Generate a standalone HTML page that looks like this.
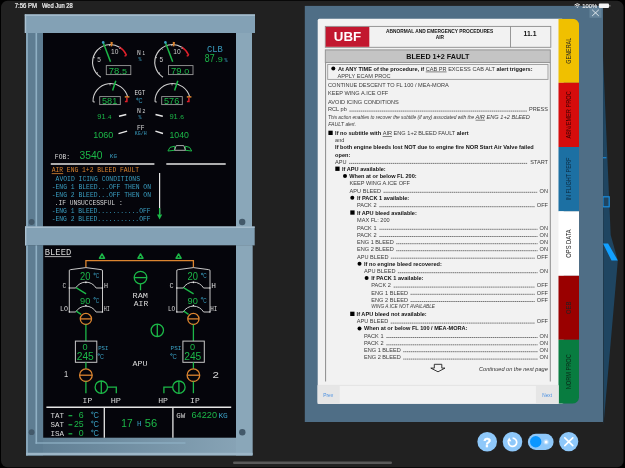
<!DOCTYPE html><html><head><meta charset="utf-8"><style>
html,body{margin:0;padding:0;background:#000;width:625px;height:468px;overflow:hidden}
svg{display:block;will-change:transform}
</style></head><body>
<svg width="625" height="468" viewBox="0 0 625 468">
<rect x="0" y="0" width="625" height="468" fill="#000"/>
<rect x="1" y="0.8" width="622.6" height="466.4" rx="6.5" fill="#212121"/>
<defs><linearGradient id="gb" x1="0" x2="1" y1="0" y2="0"><stop offset="0" stop-color="#5e7d92"/><stop offset="1" stop-color="#8aa6b8"/></linearGradient></defs>
<rect x="26" y="33" width="17" height="194" fill="#5e7d92"/>
<rect x="26" y="33" width="2" height="194" fill="#86a5b9"/>
<rect x="35.5" y="33" width="1.6" height="194" fill="#8fb0c4"/>
<rect x="236" y="33" width="16" height="194" fill="#8aa7b9"/>
<rect x="43" y="33" width="193" height="193.5" fill="#05050b"/>
<circle cx="31.6" cy="222" r="2.9" fill="#43596a"/><circle cx="242.2" cy="222" r="3.2" fill="#43596a"/>
<rect x="24.8" y="14.4" width="230.2" height="18.6" fill="#83a1b5"/>
<rect x="24.8" y="14.4" width="230.2" height="1.4" fill="#aac0d0"/><rect x="24.8" y="14.4" width="1.4" height="18.6" fill="#aac0d0"/>
<rect x="25" y="226.5" width="229.7" height="18.9" fill="#83a1b5"/>
<rect x="25" y="226.5" width="229.7" height="1.4" fill="#aac0d0"/><rect x="25" y="226.5" width="1.4" height="18.9" fill="#aac0d0"/>
<rect x="26" y="245.4" width="226.6" height="210" fill="url(#gb)"/>
<rect x="26" y="245.4" width="17" height="210" fill="#5e7d92"/>
<rect x="236" y="245.4" width="16.2" height="210" fill="#8aa7b9"/>
<rect x="26" y="245.4" width="2" height="210" fill="#86a5b9"/>
<rect x="35.5" y="245.4" width="1.6" height="198.3" fill="#8fb0c4"/>
<rect x="35.5" y="442.2" width="150" height="1.6" fill="#8fb0c4" opacity="0.8"/>
<rect x="26" y="452.8" width="226.6" height="2.6" fill="#9cb6c7"/>
<rect x="43.2" y="245.4" width="192.8" height="192.3" fill="#05050b"/>
<circle cx="31.6" cy="432.2" r="2.9" fill="#43596a"/><circle cx="242.3" cy="432.2" r="3.2" fill="#43596a"/>
<path d="M100.82 77.21 A17.7 17.7 0 0 1 119.58 47.19" fill="none" stroke="#cfcfcf" stroke-width="1.1"/>
<path d="M119.58 47.19 A17.7 17.7 0 0 1 126.49 55.28" fill="none" stroke="#e0202a" stroke-width="1.6"/>
<line x1="124.47" y1="56.14" x2="126.49" y2="55.28" stroke="#e0202a" stroke-width="1.3"/>
<line x1="97.87" y1="72.55" x2="96.64" y2="73.58" stroke="#cfcfcf" stroke-width="0.9"/>
<line x1="94.72" y1="57.76" x2="93.19" y2="57.32" stroke="#cfcfcf" stroke-width="0.9"/>
<line x1="100.29" y1="49.51" x2="99.3" y2="48.25" stroke="#cfcfcf" stroke-width="0.9"/>
<line x1="109.64" y1="46.11" x2="109.58" y2="44.51" stroke="#cfcfcf" stroke-width="0.9"/>
<line x1="119.43" y1="49.01" x2="120.35" y2="47.7" stroke="#cfcfcf" stroke-width="0.9"/>
<path d="M110.60000000000001 41.8 L112.9 42.2 L112.10000000000001 46.6 L110.5 46.2 Z" fill="#dc8530"/>
<line x1="110.5" y1="61.7" x2="103.19" y2="42.4" stroke="#1cb848" stroke-width="1.5"/>
<circle cx="103.19" cy="42.4" r="1.3" fill="#3a9fc2"/>
<text x="97.2" y="61.5" font-size="7.2" fill="#cfcfcf" font-family='"Liberation Sans",sans-serif' font-weight="normal" font-style="normal" text-anchor="start" textLength="3.6" lengthAdjust="spacingAndGlyphs" >5</text>
<text x="111.0" y="54.2" font-size="7.2" fill="#cfcfcf" font-family='"Liberation Sans",sans-serif' font-weight="normal" font-style="normal" text-anchor="start" textLength="7.4" lengthAdjust="spacingAndGlyphs" >10</text>
<rect x="106.3" y="65.6" width="24.5" height="9" fill="none" stroke="#9a9a9a" stroke-width="0.9"/>
<text x="108.7" y="73.6" font-size="9.6" fill="#1cb848" font-family='"Liberation Sans",sans-serif' font-weight="normal" font-style="normal" text-anchor="start" textLength="10.5" lengthAdjust="spacingAndGlyphs" >78</text>
<text x="119.5" y="73.6" font-size="7" fill="#1cb848" font-family='"Liberation Sans",sans-serif' font-weight="normal" font-style="normal" text-anchor="start" textLength="7.5" lengthAdjust="spacingAndGlyphs" >.5</text>
<path d="M163.02 77.21 A17.7 17.7 0 0 1 181.78 47.19" fill="none" stroke="#cfcfcf" stroke-width="1.1"/>
<path d="M181.78 47.19 A17.7 17.7 0 0 1 188.69 55.28" fill="none" stroke="#e0202a" stroke-width="1.6"/>
<line x1="186.67" y1="56.14" x2="188.69" y2="55.28" stroke="#e0202a" stroke-width="1.3"/>
<line x1="160.07" y1="72.55" x2="158.84" y2="73.58" stroke="#cfcfcf" stroke-width="0.9"/>
<line x1="156.92" y1="57.76" x2="155.39" y2="57.32" stroke="#cfcfcf" stroke-width="0.9"/>
<line x1="162.49" y1="49.51" x2="161.5" y2="48.25" stroke="#cfcfcf" stroke-width="0.9"/>
<line x1="171.84" y1="46.11" x2="171.78" y2="44.51" stroke="#cfcfcf" stroke-width="0.9"/>
<line x1="181.63" y1="49.01" x2="182.55" y2="47.7" stroke="#cfcfcf" stroke-width="0.9"/>
<path d="M172.8 41.8 L175.1 42.2 L174.3 46.6 L172.70000000000002 46.2 Z" fill="#dc8530"/>
<line x1="172.70000000000002" y1="61.7" x2="165.39" y2="42.4" stroke="#1cb848" stroke-width="1.5"/>
<circle cx="165.39" cy="42.4" r="1.3" fill="#3a9fc2"/>
<text x="159.4" y="61.5" font-size="7.2" fill="#cfcfcf" font-family='"Liberation Sans",sans-serif' font-weight="normal" font-style="normal" text-anchor="start" textLength="3.6" lengthAdjust="spacingAndGlyphs" >5</text>
<text x="173.20000000000002" y="54.2" font-size="7.2" fill="#cfcfcf" font-family='"Liberation Sans",sans-serif' font-weight="normal" font-style="normal" text-anchor="start" textLength="7.4" lengthAdjust="spacingAndGlyphs" >10</text>
<rect x="168.5" y="65.6" width="24.5" height="9" fill="none" stroke="#9a9a9a" stroke-width="0.9"/>
<text x="170.9" y="73.6" font-size="9.6" fill="#1cb848" font-family='"Liberation Sans",sans-serif' font-weight="normal" font-style="normal" text-anchor="start" textLength="10.5" lengthAdjust="spacingAndGlyphs" >79</text>
<text x="181.7" y="73.6" font-size="7" fill="#1cb848" font-family='"Liberation Sans",sans-serif' font-weight="normal" font-style="normal" text-anchor="start" textLength="7.5" lengthAdjust="spacingAndGlyphs" >.0</text>
<text x="137" y="54.5" font-size="7" fill="#d8d8d8" font-family='"Liberation Mono",monospace' font-weight="normal" font-style="normal" text-anchor="start" textLength="3.8" lengthAdjust="spacingAndGlyphs" >N</text>
<text x="142.4" y="54.8" font-size="5" fill="#d8d8d8" font-family='"Liberation Sans",sans-serif' font-weight="normal" font-style="normal" text-anchor="start" textLength="2.5" lengthAdjust="spacingAndGlyphs" >1</text>
<text x="138.6" y="61.2" font-size="5" fill="#3a9fc2" font-family='"Liberation Mono",monospace' font-weight="normal" font-style="normal" text-anchor="start" textLength="3" lengthAdjust="spacingAndGlyphs" >%</text>
<text x="207" y="52" font-size="9.2" fill="#3a9fc2" font-family='"Liberation Mono",monospace' font-weight="normal" font-style="normal" text-anchor="start" textLength="15.8" lengthAdjust="spacingAndGlyphs" >CLB</text>
<text x="204.8" y="62.1" font-size="10.5" fill="#1cb848" font-family='"Liberation Sans",sans-serif' font-weight="normal" font-style="normal" text-anchor="start" textLength="9.8" lengthAdjust="spacingAndGlyphs" >87</text>
<text x="215.2" y="62.1" font-size="7.2" fill="#1cb848" font-family='"Liberation Sans",sans-serif' font-weight="normal" font-style="normal" text-anchor="start" textLength="7.6" lengthAdjust="spacingAndGlyphs" >.9</text>
<text x="224.6" y="62.1" font-size="4.8" fill="#3a9fc2" font-family='"Liberation Mono",monospace' font-weight="normal" font-style="normal" text-anchor="start" textLength="3" lengthAdjust="spacingAndGlyphs" >%</text>
<path d="M93.01 101.81 A17.6 17.6 0 0 1 127.68 96.94" fill="none" stroke="#cfcfcf" stroke-width="1.1"/>
<line x1="93.01" y1="101.81" x2="94.81" y2="102.01" stroke="#cfcfcf" stroke-width="1"/>
<line x1="110.05" y1="85.41" x2="109.99" y2="83.61" stroke="#cfcfcf" stroke-width="0.9"/>
<line x1="124.8" y1="96.9" x2="129.4" y2="96.9" stroke="#dc8530" stroke-width="1.5"/>
<path d="M126.89999999999999 97.7 V101.5 H124.89999999999999" fill="none" stroke="#e0202a" stroke-width="1.5"/>
<line x1="112.6" y1="90.4" x2="115.8" y2="80.8" stroke="#1cb848" stroke-width="1.5"/>
<rect x="99.69999999999999" y="96.6" width="20.6" height="8" fill="none" stroke="#9a9a9a" stroke-width="0.9"/>
<text x="101.99999999999999" y="103.7" font-size="8.6" fill="#1cb848" font-family='"Liberation Sans",sans-serif' font-weight="normal" font-style="normal" text-anchor="start" textLength="15.2" lengthAdjust="spacingAndGlyphs" >581</text>
<path d="M155.01 101.81 A17.6 17.6 0 0 1 189.68 96.94" fill="none" stroke="#cfcfcf" stroke-width="1.1"/>
<line x1="155.01" y1="101.81" x2="156.81" y2="102.01" stroke="#cfcfcf" stroke-width="1"/>
<line x1="172.05" y1="85.41" x2="171.99" y2="83.61" stroke="#cfcfcf" stroke-width="0.9"/>
<line x1="186.79999999999998" y1="96.9" x2="191.4" y2="96.9" stroke="#dc8530" stroke-width="1.5"/>
<path d="M188.9 97.7 V101.5 H186.9" fill="none" stroke="#e0202a" stroke-width="1.5"/>
<line x1="174.6" y1="90.4" x2="177.79999999999998" y2="80.8" stroke="#1cb848" stroke-width="1.5"/>
<rect x="161.7" y="96.6" width="20.6" height="8" fill="none" stroke="#9a9a9a" stroke-width="0.9"/>
<text x="164.0" y="103.7" font-size="8.6" fill="#1cb848" font-family='"Liberation Sans",sans-serif' font-weight="normal" font-style="normal" text-anchor="start" textLength="15.2" lengthAdjust="spacingAndGlyphs" >576</text>
<text x="134.4" y="94.9" font-size="7" fill="#d8d8d8" font-family='"Liberation Mono",monospace' font-weight="normal" font-style="normal" text-anchor="start" textLength="10.9" lengthAdjust="spacingAndGlyphs" >EGT</text>
<circle cx="137.4" cy="99.0" r="0.8" fill="none" stroke="#3a9fc2" stroke-width="0.75"/>
<text x="138.5" y="102.6" font-size="6.69" fill="#3a9fc2" font-family='"Liberation Sans",sans-serif' textLength="4.00" lengthAdjust="spacingAndGlyphs">C</text>
<text x="137" y="112.8" font-size="6.5" fill="#d8d8d8" font-family='"Liberation Mono",monospace' font-weight="normal" font-style="normal" text-anchor="start" textLength="3.9" lengthAdjust="spacingAndGlyphs" >N</text>
<text x="142.4" y="113" font-size="5" fill="#d8d8d8" font-family='"Liberation Sans",sans-serif' font-weight="normal" font-style="normal" text-anchor="start" textLength="2.8" lengthAdjust="spacingAndGlyphs" >2</text>
<text x="138.4" y="118.8" font-size="5" fill="#3a9fc2" font-family='"Liberation Mono",monospace' font-weight="normal" font-style="normal" text-anchor="start" textLength="3" lengthAdjust="spacingAndGlyphs" >%</text>
<text x="97.2" y="118.6" font-size="7.2" fill="#1cb848" font-family='"Liberation Sans",sans-serif' font-weight="normal" font-style="normal" text-anchor="start" textLength="8.4" lengthAdjust="spacingAndGlyphs" >91</text>
<text x="106.3" y="118.6" font-size="5.5" fill="#1cb848" font-family='"Liberation Sans",sans-serif' font-weight="normal" font-style="normal" text-anchor="start" textLength="5.2" lengthAdjust="spacingAndGlyphs" >.4</text>
<text x="169.4" y="118.6" font-size="7.2" fill="#1cb848" font-family='"Liberation Sans",sans-serif' font-weight="normal" font-style="normal" text-anchor="start" textLength="8.4" lengthAdjust="spacingAndGlyphs" >91</text>
<text x="178.5" y="118.6" font-size="5.5" fill="#1cb848" font-family='"Liberation Sans",sans-serif' font-weight="normal" font-style="normal" text-anchor="start" textLength="5.6" lengthAdjust="spacingAndGlyphs" >.6</text>
<line x1="119" y1="116.3" x2="126.3" y2="114.5" stroke="#e8e8e8" stroke-width="1.4"/>
<line x1="155.5" y1="114.5" x2="162.8" y2="116.3" stroke="#e8e8e8" stroke-width="1.4"/>
<line x1="118.5" y1="133.7" x2="127.1" y2="131.2" stroke="#e8e8e8" stroke-width="1.4"/>
<line x1="155.4" y1="131.2" x2="163" y2="133.5" stroke="#e8e8e8" stroke-width="1.4"/>
<text x="137" y="129.5" font-size="7" fill="#d8d8d8" font-family='"Liberation Mono",monospace' font-weight="normal" font-style="normal" text-anchor="start" textLength="7.6" lengthAdjust="spacingAndGlyphs" >FF</text>
<text x="134.8" y="134.6" font-size="4.6" fill="#3a9fc2" font-family='"Liberation Mono",monospace' font-weight="normal" font-style="normal" text-anchor="start" textLength="11.8" lengthAdjust="spacingAndGlyphs" >KG/H</text>
<text x="93.3" y="138" font-size="9.4" fill="#1cb848" font-family='"Liberation Sans",sans-serif' font-weight="normal" font-style="normal" text-anchor="start" textLength="20.1" lengthAdjust="spacingAndGlyphs" >1060</text>
<text x="169.5" y="138" font-size="9.4" fill="#1cb848" font-family='"Liberation Sans",sans-serif' font-weight="normal" font-style="normal" text-anchor="start" textLength="19.5" lengthAdjust="spacingAndGlyphs" >1040</text>
<path d="M167.9 151 L170 147.4 L174.6 146.2 L174.6 150.3 Z" fill="none" stroke="#1cb848" stroke-width="1"/>
<path d="M191.7 151 L189.6 147.4 L185.4 146.2 L185.4 150.3 Z" fill="none" stroke="#1cb848" stroke-width="1"/>
<path d="M174.6 150.3 L176.2 145.6 H183.8 L185.4 150.3 Z" fill="none" stroke="#aaaaaa" stroke-width="1"/>
<text x="54.8" y="158.6" font-size="7.6" fill="#d8d8d8" font-family='"Liberation Mono",monospace' font-weight="normal" font-style="normal" text-anchor="start" textLength="15.4" lengthAdjust="spacingAndGlyphs" >FOB:</text>
<text x="79.6" y="158.9" font-size="11" fill="#1cb848" font-family='"Liberation Sans",sans-serif' font-weight="normal" font-style="normal" text-anchor="start" textLength="23" lengthAdjust="spacingAndGlyphs" >3540</text>
<text x="109.8" y="158.4" font-size="4.6" fill="#3a9fc2" font-family='"Liberation Mono",monospace' font-weight="normal" font-style="normal" text-anchor="start" textLength="7.2" lengthAdjust="spacingAndGlyphs" >KG</text>
<line x1="50.8" y1="164" x2="154.4" y2="164" stroke="#e6e6e6" stroke-width="1.5"/>
<line x1="166.3" y1="164" x2="225.7" y2="164" stroke="#e6e6e6" stroke-width="1.5"/>
<line x1="159.6" y1="173" x2="159.6" y2="214" stroke="#e6e6e6" stroke-width="1.2"/>
<line x1="159.6" y1="208" x2="159.6" y2="217" stroke="#1cb848" stroke-width="1.3"/>
<path d="M157 214.5 L159.6 219.5 L162.2 214.5 Z" fill="#1cb848"/>
<text x="51.7" y="172.3" font-size="7" fill="#dc8530" font-family='"Liberation Mono",monospace' font-weight="normal" font-style="normal" text-anchor="start" textLength="87.3" lengthAdjust="spacingAndGlyphs" >AIR ENG 1+2 BLEED FAULT</text>
<text x="55.6" y="181.3" font-size="7" fill="#3a9fc2" font-family='"Liberation Mono",monospace' font-weight="normal" font-style="normal" text-anchor="start" textLength="84.4" lengthAdjust="spacingAndGlyphs" >AVOID ICING CONDITIONS</text>
<text x="51.7" y="189.3" font-size="7" fill="#3a9fc2" font-family='"Liberation Mono",monospace' font-weight="normal" font-style="normal" text-anchor="start" textLength="99.3" lengthAdjust="spacingAndGlyphs" >-ENG 1 BLEED...OFF THEN ON</text>
<text x="51.7" y="197.1" font-size="7" fill="#3a9fc2" font-family='"Liberation Mono",monospace' font-weight="normal" font-style="normal" text-anchor="start" textLength="99.3" lengthAdjust="spacingAndGlyphs" >-ENG 2 BLEED...OFF THEN ON</text>
<text x="54.6" y="204.7" font-size="7" fill="#d8d8d8" font-family='"Liberation Mono",monospace' font-weight="normal" font-style="normal" text-anchor="start" textLength="68.1" lengthAdjust="spacingAndGlyphs" >.IF UNSUCCESSFUL :</text>
<text x="51.7" y="212.9" font-size="7" fill="#3a9fc2" font-family='"Liberation Mono",monospace' font-weight="normal" font-style="normal" text-anchor="start" textLength="98.9" lengthAdjust="spacingAndGlyphs" >-ENG 1 BLEED...........OFF</text>
<text x="51.7" y="220.6" font-size="7" fill="#3a9fc2" font-family='"Liberation Mono",monospace' font-weight="normal" font-style="normal" text-anchor="start" textLength="98.9" lengthAdjust="spacingAndGlyphs" >-ENG 2 BLEED...........OFF</text>
<line x1="51.7" y1="173.6" x2="63.2" y2="173.6" stroke="#dc8530" stroke-width="0.8"/>
<text x="44.8" y="255.2" font-size="8.6" fill="#d8d8d8" font-family='"Liberation Mono",monospace' font-weight="normal" font-style="normal" text-anchor="start" textLength="26.4" lengthAdjust="spacingAndGlyphs" >BLEED</text>
<line x1="44.8" y1="256.6" x2="71.2" y2="256.6" stroke="#d8d8d8" stroke-width="0.8"/>
<path d="M102 254 L104.5 258.2 H99.5 Z" fill="none" stroke="#1cb848" stroke-width="1.5" stroke-linejoin="round"/>
<path d="M140.5 254 L143.0 258.2 H138.0 Z" fill="none" stroke="#1cb848" stroke-width="1.5" stroke-linejoin="round"/>
<path d="M178.6 254 L181.1 258.2 H176.1 Z" fill="none" stroke="#1cb848" stroke-width="1.5" stroke-linejoin="round"/>
<path d="M85.9 267.6 V260.6 H193.4 V267.6" fill="none" stroke="#dc8530" stroke-width="1.3"/>
<path d="M69.30000000000001 312 V270.2 L70.80000000000001 269.6 L85.9 267.6 L101.0 269.6 L102.5 270.2 V312" fill="none" stroke="#c8c8c8" stroke-width="1"/>
<path d="M69.30000000000001 288 H75.7 A11.8 11.8 0 0 1 96.10000000000001 288 H102.5" fill="none" stroke="#c8c8c8" stroke-width="1"/>
<circle cx="85.9" cy="282.4" r="0.8" fill="#eee"/>
<circle cx="69.30000000000001" cy="288" r="0.7" fill="#eee"/><circle cx="102.5" cy="288" r="0.7" fill="#eee"/>
<path d="M69.30000000000001 312 H75.7 A11.8 11.8 0 0 1 96.10000000000001 312 H102.5" fill="none" stroke="#c8c8c8" stroke-width="1"/>
<circle cx="85.9" cy="305.6" r="0.8" fill="#eee"/>
<circle cx="69.30000000000001" cy="312" r="0.7" fill="#eee"/><circle cx="102.5" cy="312" r="0.7" fill="#eee"/>
<line x1="76.0" y1="287.7" x2="86.10000000000001" y2="293.8" stroke="#1cb848" stroke-width="1.4"/>
<line x1="76.30000000000001" y1="311.2" x2="81.0" y2="314.4" stroke="#1cb848" stroke-width="1.4"/>
<text x="80.0" y="279.9" font-size="10.4" fill="#1cb848" font-family='"Liberation Sans",sans-serif' font-weight="normal" font-style="normal" text-anchor="start" textLength="10.4" lengthAdjust="spacingAndGlyphs" >20</text>
<circle cx="94.60000000000001" cy="274.0" r="0.8" fill="none" stroke="#3a9fc2" stroke-width="0.75"/>
<text x="95.7" y="278" font-size="7.27" fill="#3a9fc2" font-family='"Liberation Sans",sans-serif' textLength="3.40" lengthAdjust="spacingAndGlyphs">C</text>
<text x="80.10000000000001" y="303.5" font-size="9.6" fill="#1cb848" font-family='"Liberation Sans",sans-serif' font-weight="normal" font-style="normal" text-anchor="start" textLength="10.3" lengthAdjust="spacingAndGlyphs" >90</text>
<circle cx="94.60000000000001" cy="298.3" r="0.8" fill="none" stroke="#3a9fc2" stroke-width="0.75"/>
<text x="95.7" y="302.6" font-size="7.70" fill="#3a9fc2" font-family='"Liberation Sans",sans-serif' textLength="3.40" lengthAdjust="spacingAndGlyphs">C</text>
<text x="62.40000000000001" y="287.7" font-size="7" fill="#d8d8d8" font-family='"Liberation Mono",monospace' font-weight="normal" font-style="normal" text-anchor="start" textLength="3.6" lengthAdjust="spacingAndGlyphs" >C</text>
<text x="104.1" y="287.7" font-size="7" fill="#d8d8d8" font-family='"Liberation Mono",monospace' font-weight="normal" font-style="normal" text-anchor="start" textLength="4" lengthAdjust="spacingAndGlyphs" >H</text>
<text x="60.000000000000014" y="310.8" font-size="7" fill="#d8d8d8" font-family='"Liberation Mono",monospace' font-weight="normal" font-style="normal" text-anchor="start" textLength="8" lengthAdjust="spacingAndGlyphs" >LO</text>
<text x="103.7" y="310.8" font-size="7" fill="#d8d8d8" font-family='"Liberation Mono",monospace' font-weight="normal" font-style="normal" text-anchor="start" textLength="6" lengthAdjust="spacingAndGlyphs" >HI</text>
<circle cx="85.9" cy="318.9" r="5.6" fill="none" stroke="#dc8530" stroke-width="1.3"/>
<line x1="80.30000000000001" y1="318.9" x2="91.5" y2="318.9" stroke="#dc8530" stroke-width="1.3"/>
<line x1="85.9" y1="324.5" x2="85.9" y2="341" stroke="#1cb848" stroke-width="1.3"/>
<rect x="75.4" y="341.1" width="21.4" height="21.2" fill="none" stroke="#c8c8c8" stroke-width="1"/>
<text x="82.60000000000001" y="350.4" font-size="9.4" fill="#1cb848" font-family='"Liberation Sans",sans-serif' font-weight="normal" font-style="normal" text-anchor="start" textLength="5.1" lengthAdjust="spacingAndGlyphs" >0</text>
<text x="76.7" y="359.8" font-size="10.7" fill="#1cb848" font-family='"Liberation Sans",sans-serif' font-weight="normal" font-style="normal" text-anchor="start" textLength="17.1" lengthAdjust="spacingAndGlyphs" >245</text>
<text x="98.2" y="350" font-size="5.6" fill="#3a9fc2" font-family='"Liberation Mono",monospace' font-weight="normal" font-style="normal" text-anchor="start" textLength="10.1" lengthAdjust="spacingAndGlyphs" >PSI</text>
<circle cx="98.8" cy="354.5" r="0.8" fill="none" stroke="#3a9fc2" stroke-width="0.75"/>
<text x="99.89999999999999" y="358.6" font-size="7.41" fill="#3a9fc2" font-family='"Liberation Sans",sans-serif' textLength="3.90" lengthAdjust="spacingAndGlyphs">C</text>
<line x1="85.9" y1="362.3" x2="85.9" y2="368.8" stroke="#1cb848" stroke-width="1.3"/>
<circle cx="85.9" cy="375.2" r="6.3" fill="none" stroke="#dc8530" stroke-width="1.3"/>
<line x1="79.60000000000001" y1="375.2" x2="92.2" y2="375.2" stroke="#dc8530" stroke-width="1.3"/>
<line x1="85.9" y1="381.5" x2="85.9" y2="393.2" stroke="#1cb848" stroke-width="1.3"/>
<text x="82.60000000000001" y="402.5" font-size="7.6" fill="#d8d8d8" font-family='"Liberation Mono",monospace' font-weight="normal" font-style="normal" text-anchor="start" textLength="9.6" lengthAdjust="spacingAndGlyphs" >IP</text>
<path d="M176.8 312 V270.2 L178.3 269.6 L193.4 267.6 L208.5 269.6 L210.0 270.2 V312" fill="none" stroke="#c8c8c8" stroke-width="1"/>
<path d="M176.8 288 H183.20000000000002 A11.8 11.8 0 0 1 203.6 288 H210.0" fill="none" stroke="#c8c8c8" stroke-width="1"/>
<circle cx="193.4" cy="282.4" r="0.8" fill="#eee"/>
<circle cx="176.8" cy="288" r="0.7" fill="#eee"/><circle cx="210.0" cy="288" r="0.7" fill="#eee"/>
<path d="M176.8 312 H183.20000000000002 A11.8 11.8 0 0 1 203.6 312 H210.0" fill="none" stroke="#c8c8c8" stroke-width="1"/>
<circle cx="193.4" cy="305.6" r="0.8" fill="#eee"/>
<circle cx="176.8" cy="312" r="0.7" fill="#eee"/><circle cx="210.0" cy="312" r="0.7" fill="#eee"/>
<line x1="183.5" y1="287.7" x2="193.6" y2="293.8" stroke="#1cb848" stroke-width="1.4"/>
<line x1="183.8" y1="311.2" x2="188.5" y2="314.4" stroke="#1cb848" stroke-width="1.4"/>
<text x="187.5" y="279.9" font-size="10.4" fill="#1cb848" font-family='"Liberation Sans",sans-serif' font-weight="normal" font-style="normal" text-anchor="start" textLength="10.4" lengthAdjust="spacingAndGlyphs" >20</text>
<circle cx="202.10000000000002" cy="274.0" r="0.8" fill="none" stroke="#3a9fc2" stroke-width="0.75"/>
<text x="203.20000000000002" y="278" font-size="7.27" fill="#3a9fc2" font-family='"Liberation Sans",sans-serif' textLength="3.40" lengthAdjust="spacingAndGlyphs">C</text>
<text x="187.6" y="303.5" font-size="9.6" fill="#1cb848" font-family='"Liberation Sans",sans-serif' font-weight="normal" font-style="normal" text-anchor="start" textLength="10.3" lengthAdjust="spacingAndGlyphs" >90</text>
<circle cx="202.10000000000002" cy="298.3" r="0.8" fill="none" stroke="#3a9fc2" stroke-width="0.75"/>
<text x="203.20000000000002" y="302.6" font-size="7.70" fill="#3a9fc2" font-family='"Liberation Sans",sans-serif' textLength="3.40" lengthAdjust="spacingAndGlyphs">C</text>
<text x="169.60000000000002" y="287.7" font-size="7" fill="#d8d8d8" font-family='"Liberation Mono",monospace' font-weight="normal" font-style="normal" text-anchor="start" textLength="4.1" lengthAdjust="spacingAndGlyphs" >C</text>
<text x="211.2" y="287.7" font-size="7" fill="#d8d8d8" font-family='"Liberation Mono",monospace' font-weight="normal" font-style="normal" text-anchor="start" textLength="4.7" lengthAdjust="spacingAndGlyphs" >H</text>
<text x="167.9" y="310.8" font-size="7" fill="#d8d8d8" font-family='"Liberation Mono",monospace' font-weight="normal" font-style="normal" text-anchor="start" textLength="7.3" lengthAdjust="spacingAndGlyphs" >LO</text>
<text x="210.3" y="310.8" font-size="7" fill="#d8d8d8" font-family='"Liberation Mono",monospace' font-weight="normal" font-style="normal" text-anchor="start" textLength="7.1" lengthAdjust="spacingAndGlyphs" >HI</text>
<circle cx="193.4" cy="318.9" r="5.6" fill="none" stroke="#dc8530" stroke-width="1.3"/>
<line x1="187.8" y1="318.9" x2="199.0" y2="318.9" stroke="#dc8530" stroke-width="1.3"/>
<line x1="193.4" y1="324.5" x2="193.4" y2="341" stroke="#1cb848" stroke-width="1.3"/>
<rect x="182.9" y="341.1" width="21.4" height="21.2" fill="none" stroke="#c8c8c8" stroke-width="1"/>
<text x="190.1" y="350.4" font-size="9.4" fill="#1cb848" font-family='"Liberation Sans",sans-serif' font-weight="normal" font-style="normal" text-anchor="start" textLength="5.1" lengthAdjust="spacingAndGlyphs" >0</text>
<text x="184.20000000000002" y="359.8" font-size="10.7" fill="#1cb848" font-family='"Liberation Sans",sans-serif' font-weight="normal" font-style="normal" text-anchor="start" textLength="17.1" lengthAdjust="spacingAndGlyphs" >245</text>
<text x="170.6" y="350" font-size="5.6" fill="#3a9fc2" font-family='"Liberation Mono",monospace' font-weight="normal" font-style="normal" text-anchor="start" textLength="10.8" lengthAdjust="spacingAndGlyphs" >PSI</text>
<circle cx="171.4" cy="354.5" r="0.8" fill="none" stroke="#3a9fc2" stroke-width="0.75"/>
<text x="172.5" y="358.6" font-size="7.41" fill="#3a9fc2" font-family='"Liberation Sans",sans-serif' textLength="4.30" lengthAdjust="spacingAndGlyphs">C</text>
<line x1="193.4" y1="362.3" x2="193.4" y2="368.8" stroke="#1cb848" stroke-width="1.3"/>
<circle cx="193.4" cy="375.2" r="6.3" fill="none" stroke="#dc8530" stroke-width="1.3"/>
<line x1="187.1" y1="375.2" x2="199.70000000000002" y2="375.2" stroke="#dc8530" stroke-width="1.3"/>
<line x1="193.4" y1="381.5" x2="193.4" y2="393.2" stroke="#1cb848" stroke-width="1.3"/>
<text x="190.1" y="402.5" font-size="7.6" fill="#d8d8d8" font-family='"Liberation Mono",monospace' font-weight="normal" font-style="normal" text-anchor="start" textLength="9.6" lengthAdjust="spacingAndGlyphs" >IP</text>
<text x="64" y="376.9" font-size="8.6" fill="#d8d8d8" font-family='"Liberation Sans",sans-serif' font-weight="normal" font-style="normal" text-anchor="start" textLength="4.2" lengthAdjust="spacingAndGlyphs" >1</text>
<text x="212.6" y="377.9" font-size="8.6" fill="#d8d8d8" font-family='"Liberation Sans",sans-serif' font-weight="normal" font-style="normal" text-anchor="start" textLength="6.4" lengthAdjust="spacingAndGlyphs" >2</text>
<circle cx="101.3" cy="387.2" r="6.2" fill="none" stroke="#1cb848" stroke-width="1.3"/>
<line x1="101.3" y1="381" x2="101.3" y2="393.4" stroke="#1cb848" stroke-width="1.3"/>
<path d="M107.5 387.2 H116.3 V393.2" fill="none" stroke="#1cb848" stroke-width="1.3"/>
<circle cx="178.9" cy="387.2" r="6.2" fill="none" stroke="#1cb848" stroke-width="1.3"/>
<line x1="178.9" y1="381" x2="178.9" y2="393.4" stroke="#1cb848" stroke-width="1.3"/>
<path d="M172.70000000000002 387.2 H163.9 V393.2" fill="none" stroke="#1cb848" stroke-width="1.3"/>
<text x="110.7" y="402.5" font-size="7.6" fill="#d8d8d8" font-family='"Liberation Mono",monospace' font-weight="normal" font-style="normal" text-anchor="start" textLength="10.3" lengthAdjust="spacingAndGlyphs" >HP</text>
<text x="158.2" y="402.5" font-size="7.6" fill="#d8d8d8" font-family='"Liberation Mono",monospace' font-weight="normal" font-style="normal" text-anchor="start" textLength="9.8" lengthAdjust="spacingAndGlyphs" >HP</text>
<circle cx="140.5" cy="277.6" r="6.3" fill="none" stroke="#1cb848" stroke-width="1.3"/>
<line x1="134.2" y1="277.6" x2="146.8" y2="277.6" stroke="#1cb848" stroke-width="1.3"/>
<line x1="140.5" y1="283.9" x2="140.5" y2="290.3" stroke="#1cb848" stroke-width="1.3"/>
<text x="132.5" y="298" font-size="7.6" fill="#d8d8d8" font-family='"Liberation Mono",monospace' font-weight="normal" font-style="normal" text-anchor="start" textLength="15.4" lengthAdjust="spacingAndGlyphs" >RAM</text>
<text x="133.8" y="306.2" font-size="7.6" fill="#d8d8d8" font-family='"Liberation Mono",monospace' font-weight="normal" font-style="normal" text-anchor="start" textLength="14.4" lengthAdjust="spacingAndGlyphs" >AIR</text>
<circle cx="157.3" cy="330.3" r="6.2" fill="none" stroke="#1cb848" stroke-width="1.3"/>
<line x1="157.3" y1="324.1" x2="157.3" y2="336.5" stroke="#1cb848" stroke-width="1.3"/>
<text x="132.5" y="366" font-size="7.6" fill="#d8d8d8" font-family='"Liberation Mono",monospace' font-weight="normal" font-style="normal" text-anchor="start" textLength="15" lengthAdjust="spacingAndGlyphs" >APU</text>
<line x1="46.4" y1="407.3" x2="231.2" y2="407.3" stroke="#e6e6e6" stroke-width="1.5"/>
<line x1="104.3" y1="407.3" x2="104.3" y2="437.7" stroke="#e6e6e6" stroke-width="1.3"/>
<line x1="172.9" y1="407.3" x2="172.9" y2="437.7" stroke="#e6e6e6" stroke-width="1.3"/>
<text x="50.4" y="418.1" font-size="7.6" fill="#d8d8d8" font-family='"Liberation Mono",monospace' font-weight="normal" font-style="normal" text-anchor="start" textLength="13.6" lengthAdjust="spacingAndGlyphs" >TAT</text>
<rect x="68.5" y="415.1" width="3.8" height="1.2" fill="#1cb848"/>
<text x="78.7" y="418.1" font-size="9.6" fill="#1cb848" font-family='"Liberation Sans",sans-serif' font-weight="normal" font-style="normal" text-anchor="start" textLength="4.9" lengthAdjust="spacingAndGlyphs" >6</text>
<circle cx="92.35" cy="412.85" r="0.85" fill="none" stroke="#3a9fc2" stroke-width="0.75"/>
<text x="93.5" y="418.1" font-size="9.16" fill="#3a9fc2" font-family='"Liberation Sans",sans-serif' textLength="5.40" lengthAdjust="spacingAndGlyphs">C</text>
<text x="50.4" y="427.2" font-size="7.6" fill="#d8d8d8" font-family='"Liberation Mono",monospace' font-weight="normal" font-style="normal" text-anchor="start" textLength="13.6" lengthAdjust="spacingAndGlyphs" >SAT</text>
<rect x="68.5" y="424.2" width="3.8" height="1.2" fill="#1cb848"/>
<text x="73.9" y="427.2" font-size="9.6" fill="#1cb848" font-family='"Liberation Sans",sans-serif' font-weight="normal" font-style="normal" text-anchor="start" textLength="9.7" lengthAdjust="spacingAndGlyphs" >25</text>
<circle cx="92.35" cy="421.95" r="0.85" fill="none" stroke="#3a9fc2" stroke-width="0.75"/>
<text x="93.5" y="427.2" font-size="9.16" fill="#3a9fc2" font-family='"Liberation Sans",sans-serif' textLength="5.40" lengthAdjust="spacingAndGlyphs">C</text>
<text x="50.4" y="436.2" font-size="7.6" fill="#d8d8d8" font-family='"Liberation Mono",monospace' font-weight="normal" font-style="normal" text-anchor="start" textLength="13.6" lengthAdjust="spacingAndGlyphs" >ISA</text>
<rect x="68.5" y="433.2" width="3.8" height="1.2" fill="#1cb848"/>
<text x="78.7" y="436.2" font-size="9.6" fill="#1cb848" font-family='"Liberation Sans",sans-serif' font-weight="normal" font-style="normal" text-anchor="start" textLength="4.9" lengthAdjust="spacingAndGlyphs" >0</text>
<circle cx="92.35" cy="430.95" r="0.85" fill="none" stroke="#3a9fc2" stroke-width="0.75"/>
<text x="93.5" y="436.2" font-size="9.16" fill="#3a9fc2" font-family='"Liberation Sans",sans-serif' textLength="5.40" lengthAdjust="spacingAndGlyphs">C</text>
<text x="121.3" y="426.5" font-size="10.9" fill="#1cb848" font-family='"Liberation Sans",sans-serif' font-weight="normal" font-style="normal" text-anchor="start" textLength="11.2" lengthAdjust="spacingAndGlyphs" >17</text>
<text x="137" y="426" font-size="6.4" fill="#3a9fc2" font-family='"Liberation Mono",monospace' font-weight="normal" font-style="normal" text-anchor="start" textLength="4.5" lengthAdjust="spacingAndGlyphs" >H</text>
<text x="144.8" y="426.5" font-size="10.9" fill="#1cb848" font-family='"Liberation Sans",sans-serif' font-weight="normal" font-style="normal" text-anchor="start" textLength="12.4" lengthAdjust="spacingAndGlyphs" >56</text>
<text x="176.2" y="418" font-size="7.6" fill="#d8d8d8" font-family='"Liberation Mono",monospace' font-weight="normal" font-style="normal" text-anchor="start" textLength="9" lengthAdjust="spacingAndGlyphs" >GW</text>
<text x="191.5" y="418.1" font-size="8.7" fill="#1cb848" font-family='"Liberation Sans",sans-serif' font-weight="normal" font-style="normal" text-anchor="start" textLength="25.5" lengthAdjust="spacingAndGlyphs" >64220</text>
<text x="218.4" y="418" font-size="6.4" fill="#3a9fc2" font-family='"Liberation Mono",monospace' font-weight="normal" font-style="normal" text-anchor="start" textLength="9.4" lengthAdjust="spacingAndGlyphs" >KG</text>
<path d="M603 56 L610.7 235 L617.8 260.4 L617 270 L603.5 425 Z" fill="#1f4561"/>
<path d="M603 243.6 L608.1 243.6 L617.8 260.4 L611.5 260.4 Z" fill="#12a0ff"/>
<rect x="603" y="196.8" width="6.2" height="10" fill="none" stroke="#1a8ee0" stroke-width="1.2"/>
<rect x="603" y="157.2" width="3.4" height="1.1" fill="#1a8ee0"/>
<rect x="304.8" y="5.9" width="298.2" height="416.1" fill="#4f6e86"/>
<rect x="589.5" y="7.7" width="12" height="10.1" fill="#64839a"/>
<path d="M592.2 9.8 L598.8 15.9 M598.8 9.8 L592.2 15.9" stroke="#e8eef2" stroke-width="0.9"/>
<rect x="317.7" y="18.7" width="246" height="385" rx="1.8" fill="#f2f2f2"/>
<clipPath id="tc"><rect x="540" y="18.7" width="39" height="385" rx="6.5"/></clipPath>
<g clip-path="url(#tc)">
<rect x="558.5" y="18.7" width="20.5" height="64.1" fill="#f0c000"/>
<rect x="558.5" y="82.8" width="20.5" height="64.2" fill="#d60c0c"/>
<rect x="558.5" y="147" width="20.5" height="64.30000000000001" fill="#1c70a3"/>
<rect x="558.5" y="211.3" width="20.5" height="64.5" fill="#ffffff"/>
<rect x="558.5" y="275.8" width="20.5" height="64.0" fill="#9a0000"/>
<rect x="558.5" y="339.8" width="20.5" height="63.89999999999998" fill="#087c40"/>
</g>
<text transform="translate(570.6 50.75) rotate(-90)" x="0" y="0" font-size="6.4" fill="#222" font-family='"Liberation Sans",sans-serif' text-anchor="middle" textLength="25.9" lengthAdjust="spacingAndGlyphs">GENERAL</text>
<text transform="translate(570.6 114.9) rotate(-90)" x="0" y="0" font-size="6.4" fill="#3a0000" font-family='"Liberation Sans",sans-serif' text-anchor="middle" textLength="47.2" lengthAdjust="spacingAndGlyphs">ABN/EMER PROC</text>
<text transform="translate(570.6 179.15) rotate(-90)" x="0" y="0" font-size="6.4" fill="#0c2a40" font-family='"Liberation Sans",sans-serif' text-anchor="middle" textLength="42.9" lengthAdjust="spacingAndGlyphs">IN FLIGHT PERF</text>
<text transform="translate(570.6 243.55) rotate(-90)" x="0" y="0" font-size="6.4" fill="#222" font-family='"Liberation Sans",sans-serif' text-anchor="middle" textLength="28.3" lengthAdjust="spacingAndGlyphs">OPS DATA</text>
<text transform="translate(570.6 307.8) rotate(-90)" x="0" y="0" font-size="6.4" fill="#222" font-family='"Liberation Sans",sans-serif' text-anchor="middle" textLength="12.5" lengthAdjust="spacingAndGlyphs">OEB</text>
<text transform="translate(570.6 371.75) rotate(-90)" x="0" y="0" font-size="6.4" fill="#0a2a18" font-family='"Liberation Sans",sans-serif' text-anchor="middle" textLength="35" lengthAdjust="spacingAndGlyphs">NORM PROC</text>
<rect x="325.3" y="26.4" width="225.5" height="20.9" fill="none" stroke="#8c8c8c" stroke-width="0.9"/>
<rect x="325.7" y="26.9" width="43.6" height="19.9" fill="#c2172f"/>
<line x1="510.5" y1="26.4" x2="510.5" y2="47.3" stroke="#8c8c8c" stroke-width="0.9"/>
<text x="333.8" y="41.1" font-size="13" fill="#ffffff" font-family='"Liberation Sans",sans-serif' font-weight="bold" font-style="normal" text-anchor="start" textLength="27.4" lengthAdjust="spacingAndGlyphs" >UBF</text>
<text x="386.1" y="33.4" font-size="5.3" fill="#111" font-family='"Liberation Sans",sans-serif' font-weight="bold" font-style="normal" text-anchor="start" textLength="107.2" lengthAdjust="spacingAndGlyphs" >ABNORMAL AND EMERGENCY PROCEDURES</text>
<text x="435.7" y="39.2" font-size="5.3" fill="#111" font-family='"Liberation Sans",sans-serif' font-weight="bold" font-style="normal" text-anchor="start" textLength="8.3" lengthAdjust="spacingAndGlyphs" >AIR</text>
<text x="523.6" y="35.8" font-size="7.8" fill="#111" font-family='"Liberation Sans",sans-serif' font-weight="bold" font-style="normal" text-anchor="start" textLength="12.9" lengthAdjust="spacingAndGlyphs" >11.1</text>
<rect x="325.3" y="49.9" width="225" height="12.5" fill="#c4c4c4" stroke="#8c8c8c" stroke-width="0.9"/>
<text x="406.2" y="58.8" font-size="8" fill="#111" font-family='"Liberation Sans",sans-serif' font-weight="bold" font-style="normal" text-anchor="start" textLength="63.3" lengthAdjust="spacingAndGlyphs" >BLEED 1+2 FAULT</text>
<line x1="325.6" y1="62.4" x2="325.6" y2="381.5" stroke="#8c8c8c" stroke-width="1"/>
<line x1="550.3" y1="62.4" x2="550.3" y2="381.5" stroke="#8c8c8c" stroke-width="1"/>
<rect x="327.7" y="64.5" width="220.3" height="14.9" fill="none" stroke="#9a9a9a" stroke-width="0.9"/>
<circle cx="333.3" cy="68.6" r="2" fill="#000"/>
<text transform="translate(338 70.6) scale(0.935 1)" font-size="6.0" font-family='"Liberation Sans",sans-serif' xml:space="preserve"><tspan font-weight="bold" font-style="normal" fill="#111">At ANY TIME of the procedure, if </tspan><tspan font-weight="normal" font-style="normal" fill="#3a3a3a" text-decoration="underline">CAB PR</tspan><tspan font-weight="normal" font-style="normal" fill="#3a3a3a"> EXCESS CAB ALT </tspan><tspan font-weight="bold" font-style="normal" fill="#111">alert triggers:</tspan></text>
<text transform="translate(337.6 77.5) scale(0.935 1)" font-size="6.0" font-family='"Liberation Sans",sans-serif' xml:space="preserve"><tspan font-weight="normal" font-style="normal" fill="#3a3a3a">APPLY ECAM PROC</tspan></text>
<text transform="translate(328 87.4) scale(0.935 1)" font-size="6.0" font-family='"Liberation Sans",sans-serif' xml:space="preserve"><tspan font-weight="normal" font-style="normal" fill="#3a3a3a">CONTINUE DESCENT TO FL 100 / MEA-MORA</tspan></text>
<text transform="translate(328 95.4) scale(0.935 1)" font-size="6.0" font-family='"Liberation Sans",sans-serif' xml:space="preserve"><tspan font-weight="normal" font-style="normal" fill="#3a3a3a">KEEP WING A.ICE OFF</tspan></text>
<text transform="translate(328 103.5) scale(0.935 1)" font-size="6.0" font-family='"Liberation Sans",sans-serif' xml:space="preserve"><tspan font-weight="normal" font-style="normal" fill="#3a3a3a">AVOID ICING CONDITIONS</tspan></text>
<text transform="translate(328 111.4) scale(0.935 1)" font-size="6.0" font-family='"Liberation Sans",sans-serif' xml:space="preserve"><tspan font-weight="normal" font-style="normal" fill="#3a3a3a">RCL pb</tspan></text>
<text transform="translate(548 111.4) scale(0.935 1)" font-size="6.0" fill="#3a3a3a" font-family='"Liberation Sans",sans-serif' text-anchor="end">PRESS</text>
<line x1="349.42" y1="111.10000000000001" x2="526.98" y2="111.10000000000001" stroke="#606060" stroke-width="0.85" stroke-dasharray="1.4 0.5"/>
<text transform="translate(328 118.8) scale(0.94 1)" font-size="6.0" font-family='"Liberation Sans",sans-serif' xml:space="preserve"><tspan font-weight="normal" font-style="italic" fill="#3a3a3a" font-size="5.1">This action enables to recover the subtitle (if any) associated with the </tspan><tspan font-weight="normal" font-style="italic" fill="#3a3a3a" text-decoration="underline">AIR</tspan><tspan font-weight="normal" font-style="italic" fill="#3a3a3a"> ENG 1+2 BLEED</tspan></text>
<text transform="translate(328.2 126) scale(0.94 1)" font-size="6.0" font-family='"Liberation Sans",sans-serif' xml:space="preserve"><tspan font-weight="normal" font-style="italic" fill="#3a3a3a" font-size="5.6">FAULT</tspan><tspan font-weight="normal" font-style="italic" fill="#3a3a3a" font-size="5.1"> alert.</tspan></text>
<rect x="328.4" y="130.7" width="4.3" height="4.3" fill="#000"/>
<text transform="translate(335.1 135) scale(0.935 1)" font-size="6.0" font-family='"Liberation Sans",sans-serif' xml:space="preserve"><tspan font-weight="bold" font-style="normal" fill="#111">If no subtitle with </tspan><tspan font-weight="normal" font-style="normal" fill="#3a3a3a" text-decoration="underline">AIR</tspan><tspan font-weight="normal" font-style="normal" fill="#3a3a3a"> ENG 1+2 BLEED FAULT </tspan><tspan font-weight="bold" font-style="normal" fill="#111">alert</tspan></text>
<text transform="translate(335.1 141.7) scale(0.935 1)" font-size="6.0" font-family='"Liberation Sans",sans-serif' xml:space="preserve"><tspan font-weight="normal" font-style="normal" fill="#3a3a3a">and</tspan></text>
<text transform="translate(335.1 149.4) scale(0.935 1)" font-size="6.0" font-family='"Liberation Sans",sans-serif' xml:space="preserve"><tspan font-weight="bold" font-style="normal" fill="#111">If both engine bleeds lost NOT due to engine fire NOR Start Air Valve failed</tspan></text>
<text transform="translate(335.1 156.5) scale(0.935 1)" font-size="6.0" font-family='"Liberation Sans",sans-serif' xml:space="preserve"><tspan font-weight="bold" font-style="normal" fill="#111">open:</tspan></text>
<text transform="translate(335.1 163.7) scale(0.935 1)" font-size="6.0" font-family='"Liberation Sans",sans-serif' xml:space="preserve"><tspan font-weight="normal" font-style="normal" fill="#3a3a3a">APU</tspan></text>
<text transform="translate(548 163.7) scale(0.935 1)" font-size="6.0" fill="#3a3a3a" font-family='"Liberation Sans",sans-serif' text-anchor="end">START</text>
<line x1="349.04" y1="163.39999999999998" x2="527.61" y2="163.39999999999998" stroke="#606060" stroke-width="0.85" stroke-dasharray="1.4 0.5"/>
<rect x="335.3" y="166.6" width="4.3" height="4.3" fill="#000"/>
<text transform="translate(342 170.9) scale(0.935 1)" font-size="6.0" font-family='"Liberation Sans",sans-serif' xml:space="preserve"><tspan font-weight="bold" font-style="normal" fill="#111">If APU available:</tspan></text>
<circle cx="345" cy="176" r="2" fill="#000"/>
<text transform="translate(349.2 178) scale(0.935 1)" font-size="6.0" font-family='"Liberation Sans",sans-serif' xml:space="preserve"><tspan font-weight="bold" font-style="normal" fill="#111">When at or below FL 200:</tspan></text>
<text transform="translate(349.6 185.3) scale(0.935 1)" font-size="6.0" font-family='"Liberation Sans",sans-serif' xml:space="preserve"><tspan font-weight="normal" font-style="normal" fill="#3a3a3a">KEEP WING A.ICE OFF</tspan></text>
<text transform="translate(349.6 192.6) scale(0.935 1)" font-size="6.0" font-family='"Liberation Sans",sans-serif' xml:space="preserve"><tspan font-weight="normal" font-style="normal" fill="#3a3a3a">APU BLEED</tspan></text>
<text transform="translate(548 192.6) scale(0.935 1)" font-size="6.0" fill="#3a3a3a" font-family='"Liberation Sans",sans-serif' text-anchor="end">ON</text>
<line x1="383.49" y1="192.29999999999998" x2="537.59" y2="192.29999999999998" stroke="#606060" stroke-width="0.85" stroke-dasharray="1.4 0.5"/>
<circle cx="352.3" cy="197.7" r="2" fill="#000"/>
<text transform="translate(357 199.7) scale(0.935 1)" font-size="6.0" font-family='"Liberation Sans",sans-serif' xml:space="preserve"><tspan font-weight="bold" font-style="normal" fill="#111">If PACK 1 available:</tspan></text>
<text transform="translate(357 207) scale(0.935 1)" font-size="6.0" font-family='"Liberation Sans",sans-serif' xml:space="preserve"><tspan font-weight="normal" font-style="normal" fill="#3a3a3a">PACK 2</tspan></text>
<text transform="translate(548 207) scale(0.935 1)" font-size="6.0" fill="#3a3a3a" font-family='"Liberation Sans",sans-serif' text-anchor="end">OFF</text>
<line x1="379.36" y1="206.7" x2="534.78" y2="206.7" stroke="#606060" stroke-width="0.85" stroke-dasharray="1.4 0.5"/>
<rect x="350.3" y="210.39999999999998" width="4.3" height="4.3" fill="#000"/>
<text transform="translate(357 214.7) scale(0.935 1)" font-size="6.0" font-family='"Liberation Sans",sans-serif' xml:space="preserve"><tspan font-weight="bold" font-style="normal" fill="#111">If APU bleed available:</tspan></text>
<text transform="translate(357 222.4) scale(0.935 1)" font-size="6.0" font-family='"Liberation Sans",sans-serif' xml:space="preserve"><tspan font-weight="normal" font-style="normal" fill="#3a3a3a">MAX FL: 200</tspan></text>
<text transform="translate(357 229.6) scale(0.935 1)" font-size="6.0" font-family='"Liberation Sans",sans-serif' xml:space="preserve"><tspan font-weight="normal" font-style="normal" fill="#3a3a3a">PACK 1</tspan></text>
<text transform="translate(548 229.6) scale(0.935 1)" font-size="6.0" fill="#3a3a3a" font-family='"Liberation Sans",sans-serif' text-anchor="end">ON</text>
<line x1="379.36" y1="229.29999999999998" x2="537.59" y2="229.29999999999998" stroke="#606060" stroke-width="0.85" stroke-dasharray="1.4 0.5"/>
<text transform="translate(357 236.8) scale(0.935 1)" font-size="6.0" font-family='"Liberation Sans",sans-serif' xml:space="preserve"><tspan font-weight="normal" font-style="normal" fill="#3a3a3a">PACK 2</tspan></text>
<text transform="translate(548 236.8) scale(0.935 1)" font-size="6.0" fill="#3a3a3a" font-family='"Liberation Sans",sans-serif' text-anchor="end">ON</text>
<line x1="379.36" y1="236.5" x2="537.59" y2="236.5" stroke="#606060" stroke-width="0.85" stroke-dasharray="1.4 0.5"/>
<text transform="translate(357 244) scale(0.935 1)" font-size="6.0" font-family='"Liberation Sans",sans-serif' xml:space="preserve"><tspan font-weight="normal" font-style="normal" fill="#3a3a3a">ENG 1 BLEED</tspan></text>
<text transform="translate(548 244) scale(0.935 1)" font-size="6.0" fill="#3a3a3a" font-family='"Liberation Sans",sans-serif' text-anchor="end">ON</text>
<line x1="396.19" y1="243.7" x2="537.59" y2="243.7" stroke="#606060" stroke-width="0.85" stroke-dasharray="1.4 0.5"/>
<text transform="translate(357 251) scale(0.935 1)" font-size="6.0" font-family='"Liberation Sans",sans-serif' xml:space="preserve"><tspan font-weight="normal" font-style="normal" fill="#3a3a3a">ENG 2 BLEED</tspan></text>
<text transform="translate(548 251) scale(0.935 1)" font-size="6.0" fill="#3a3a3a" font-family='"Liberation Sans",sans-serif' text-anchor="end">ON</text>
<line x1="396.19" y1="250.7" x2="537.59" y2="250.7" stroke="#606060" stroke-width="0.85" stroke-dasharray="1.4 0.5"/>
<text transform="translate(357 258.5) scale(0.935 1)" font-size="6.0" font-family='"Liberation Sans",sans-serif' xml:space="preserve"><tspan font-weight="normal" font-style="normal" fill="#3a3a3a">APU BLEED</tspan></text>
<text transform="translate(548 258.5) scale(0.935 1)" font-size="6.0" fill="#3a3a3a" font-family='"Liberation Sans",sans-serif' text-anchor="end">OFF</text>
<line x1="390.89" y1="258.2" x2="534.78" y2="258.2" stroke="#606060" stroke-width="0.85" stroke-dasharray="1.4 0.5"/>
<circle cx="359.5" cy="263.8" r="2" fill="#000"/>
<text transform="translate(364 265.8) scale(0.935 1)" font-size="6.0" font-family='"Liberation Sans",sans-serif' xml:space="preserve"><tspan font-weight="bold" font-style="normal" fill="#111">If no engine bleed recovered:</tspan></text>
<text transform="translate(364 273) scale(0.935 1)" font-size="6.0" font-family='"Liberation Sans",sans-serif' xml:space="preserve"><tspan font-weight="normal" font-style="normal" fill="#3a3a3a">APU BLEED</tspan></text>
<text transform="translate(548 273) scale(0.935 1)" font-size="6.0" fill="#3a3a3a" font-family='"Liberation Sans",sans-serif' text-anchor="end">ON</text>
<line x1="397.89" y1="272.7" x2="537.59" y2="272.7" stroke="#606060" stroke-width="0.85" stroke-dasharray="1.4 0.5"/>
<circle cx="366.6" cy="278.1" r="2" fill="#000"/>
<text transform="translate(371.3 280.1) scale(0.935 1)" font-size="6.0" font-family='"Liberation Sans",sans-serif' xml:space="preserve"><tspan font-weight="bold" font-style="normal" fill="#111">If PACK 1 available:</tspan></text>
<text transform="translate(371.3 287.4) scale(0.935 1)" font-size="6.0" font-family='"Liberation Sans",sans-serif' xml:space="preserve"><tspan font-weight="normal" font-style="normal" fill="#3a3a3a">PACK 2</tspan></text>
<text transform="translate(548 287.4) scale(0.935 1)" font-size="6.0" fill="#3a3a3a" font-family='"Liberation Sans",sans-serif' text-anchor="end">OFF</text>
<line x1="393.66" y1="287.09999999999997" x2="534.78" y2="287.09999999999997" stroke="#606060" stroke-width="0.85" stroke-dasharray="1.4 0.5"/>
<text transform="translate(371.3 294.6) scale(0.935 1)" font-size="6.0" font-family='"Liberation Sans",sans-serif' xml:space="preserve"><tspan font-weight="normal" font-style="normal" fill="#3a3a3a">ENG 1 BLEED</tspan></text>
<text transform="translate(548 294.6) scale(0.935 1)" font-size="6.0" fill="#3a3a3a" font-family='"Liberation Sans",sans-serif' text-anchor="end">OFF</text>
<line x1="410.49" y1="294.3" x2="534.78" y2="294.3" stroke="#606060" stroke-width="0.85" stroke-dasharray="1.4 0.5"/>
<text transform="translate(371.3 301.8) scale(0.935 1)" font-size="6.0" font-family='"Liberation Sans",sans-serif' xml:space="preserve"><tspan font-weight="normal" font-style="normal" fill="#3a3a3a">ENG 2 BLEED</tspan></text>
<text transform="translate(548 301.8) scale(0.935 1)" font-size="6.0" fill="#3a3a3a" font-family='"Liberation Sans",sans-serif' text-anchor="end">OFF</text>
<line x1="410.49" y1="301.5" x2="534.78" y2="301.5" stroke="#606060" stroke-width="0.85" stroke-dasharray="1.4 0.5"/>
<text transform="translate(371.3 308.1) scale(0.93 1)" font-size="5.1" font-family='"Liberation Sans",sans-serif' xml:space="preserve"><tspan font-weight="normal" font-style="italic" fill="#3a3a3a">WING A.ICE NOT AVAILABLE</tspan></text>
<rect x="350.2" y="311.7" width="4.3" height="4.3" fill="#000"/>
<text transform="translate(356.6 316) scale(0.935 1)" font-size="6.0" font-family='"Liberation Sans",sans-serif' xml:space="preserve"><tspan font-weight="bold" font-style="normal" fill="#111">If APU bleed not available:</tspan></text>
<text transform="translate(356.8 323.4) scale(0.935 1)" font-size="6.0" font-family='"Liberation Sans",sans-serif' xml:space="preserve"><tspan font-weight="normal" font-style="normal" fill="#3a3a3a">APU BLEED</tspan></text>
<text transform="translate(548 323.4) scale(0.935 1)" font-size="6.0" fill="#3a3a3a" font-family='"Liberation Sans",sans-serif' text-anchor="end">OFF</text>
<line x1="390.69" y1="323.09999999999997" x2="534.78" y2="323.09999999999997" stroke="#606060" stroke-width="0.85" stroke-dasharray="1.4 0.5"/>
<circle cx="359.5" cy="328.4" r="2" fill="#000"/>
<text transform="translate(364 330.4) scale(0.935 1)" font-size="6.0" font-family='"Liberation Sans",sans-serif' xml:space="preserve"><tspan font-weight="bold" font-style="normal" fill="#111">When at or below FL 100 / MEA-MORA:</tspan></text>
<text transform="translate(364 337.8) scale(0.935 1)" font-size="6.0" font-family='"Liberation Sans",sans-serif' xml:space="preserve"><tspan font-weight="normal" font-style="normal" fill="#3a3a3a">PACK 1</tspan></text>
<text transform="translate(548 337.8) scale(0.935 1)" font-size="6.0" fill="#3a3a3a" font-family='"Liberation Sans",sans-serif' text-anchor="end">ON</text>
<line x1="386.36" y1="337.5" x2="537.59" y2="337.5" stroke="#606060" stroke-width="0.85" stroke-dasharray="1.4 0.5"/>
<text transform="translate(364 345.1) scale(0.935 1)" font-size="6.0" font-family='"Liberation Sans",sans-serif' xml:space="preserve"><tspan font-weight="normal" font-style="normal" fill="#3a3a3a">PACK 2</tspan></text>
<text transform="translate(548 345.1) scale(0.935 1)" font-size="6.0" fill="#3a3a3a" font-family='"Liberation Sans",sans-serif' text-anchor="end">ON</text>
<line x1="386.36" y1="344.8" x2="537.59" y2="344.8" stroke="#606060" stroke-width="0.85" stroke-dasharray="1.4 0.5"/>
<text transform="translate(364 352) scale(0.935 1)" font-size="6.0" font-family='"Liberation Sans",sans-serif' xml:space="preserve"><tspan font-weight="normal" font-style="normal" fill="#3a3a3a">ENG 1 BLEED</tspan></text>
<text transform="translate(548 352) scale(0.935 1)" font-size="6.0" fill="#3a3a3a" font-family='"Liberation Sans",sans-serif' text-anchor="end">ON</text>
<line x1="403.19" y1="351.7" x2="537.59" y2="351.7" stroke="#606060" stroke-width="0.85" stroke-dasharray="1.4 0.5"/>
<text transform="translate(364 359.4) scale(0.935 1)" font-size="6.0" font-family='"Liberation Sans",sans-serif' xml:space="preserve"><tspan font-weight="normal" font-style="normal" fill="#3a3a3a">ENG 2 BLEED</tspan></text>
<text transform="translate(548 359.4) scale(0.935 1)" font-size="6.0" fill="#3a3a3a" font-family='"Liberation Sans",sans-serif' text-anchor="end">ON</text>
<line x1="403.19" y1="359.09999999999997" x2="537.59" y2="359.09999999999997" stroke="#606060" stroke-width="0.85" stroke-dasharray="1.4 0.5"/>
<path d="M434.3 364.3 H441.8 V368.1 H445 L438 371.8 L430.8 368.1 H434.3 Z" fill="none" stroke="#222" stroke-width="0.9"/>
<text transform="translate(547.8 371.1) scale(0.935 1)" font-size="6.0" fill="#3a3a3a" font-family='"Liberation Sans",sans-serif' font-style="italic" text-anchor="end" fill-opacity="1" style="fill:#2e2e2e">Continued on the next page</text>
<rect x="317.7" y="385.3" width="240.8" height="18.4" fill="#f2f2f2"/>
<line x1="317.7" y1="385.4" x2="558.5" y2="385.4" stroke="#e0e0e0" stroke-width="0.8"/>
<rect x="317.7" y="385.8" width="22" height="17.9" fill="#e6e6e6"/>
<rect x="535.9" y="385.8" width="22.6" height="17.9" fill="#e6e6e6"/>
<text x="323.2" y="396.6" font-size="4.8" fill="#4a90e2" font-family='"Liberation Sans",sans-serif' font-weight="normal" font-style="normal" text-anchor="start" textLength="9.9" lengthAdjust="spacingAndGlyphs" >Prev</text>
<text x="542.3" y="396.6" font-size="4.8" fill="#4a90e2" font-family='"Liberation Sans",sans-serif' font-weight="normal" font-style="normal" text-anchor="start" textLength="9.7" lengthAdjust="spacingAndGlyphs" >Next</text>
<circle cx="487.2" cy="441.8" r="9.8" fill="#8ec8fa"/>
<text x="487.2" y="446.8" font-size="13" fill="#ffffff" font-family='"Liberation Sans",sans-serif' font-weight="bold" font-style="normal" text-anchor="middle" stroke="#fff" stroke-width="0.4">?</text>
<circle cx="512.5" cy="441.8" r="9.8" fill="#8ec8fa"/>
<path d="M512.6 438.2 A4.1 4.1 0 1 1 508.6 441.4" fill="none" stroke="#fff" stroke-width="1.7"/>
<path d="M507 441.6 L509.2 437.6 L511.4 441.2 Z" fill="#fff"/>
<rect x="527.9" y="433.8" width="25.7" height="16.1" rx="8" fill="#8ec8fa"/>
<circle cx="535.7" cy="441.8" r="5.7" fill="#0a96ff"/>
<circle cx="546.1" cy="441.9" r="2.6" fill="#ffffff" opacity="0.35"/><circle cx="546.1" cy="441.9" r="1.5" fill="#ffffff"/>
<circle cx="568.7" cy="441.6" r="9.6" fill="#8ec8fa"/>
<path d="M564.8 437.9 L572.8 445.6 M572.8 437.9 L564.8 445.6" stroke="#fff" stroke-width="1.6" stroke-linecap="round"/>
<rect x="233" y="461.5" width="159" height="2.6" rx="1.3" fill="#5a5a5a"/>
<text x="14.7" y="8.1" font-size="6.4" fill="#f0f0f0" font-family='"Liberation Sans",sans-serif' font-weight="normal" font-style="normal" text-anchor="start" textLength="22.4" lengthAdjust="spacingAndGlyphs" stroke="#f0f0f0" stroke-width="0.22">7:56 PM</text>
<text x="41.9" y="8.1" font-size="6.4" fill="#f0f0f0" font-family='"Liberation Sans",sans-serif' font-weight="normal" font-style="normal" text-anchor="start" textLength="30.9" lengthAdjust="spacingAndGlyphs" stroke="#f0f0f0" stroke-width="0.22">Wed Jun 28</text>
<text x="582.3" y="8.1" font-size="6.2" fill="#f0f0f0" font-family='"Liberation Sans",sans-serif' font-weight="normal" font-style="normal" text-anchor="start" textLength="14.9" lengthAdjust="spacingAndGlyphs" stroke="#f0f0f0" stroke-width="0.12">100%</text>
<path d="M574.47 5.07 A4.0 4.0 0 0 1 580.13 5.07 M575.53 6.13 A2.5 2.5 0 0 1 579.07 6.13" fill="none" stroke="#f0f0f0" stroke-width="0.95"/>
<path d="M577.3 7.9 L576.5 7.1 A1.1 1.1 0 0 1 578.1 7.1 Z" fill="#f0f0f0"/>
<rect x="598.8" y="3.6" width="10.2" height="4.3" rx="1" fill="#f4f4f4"/><rect x="609.4" y="4.9" width="0.9" height="1.7" fill="#aaa"/>
</svg></body></html>
